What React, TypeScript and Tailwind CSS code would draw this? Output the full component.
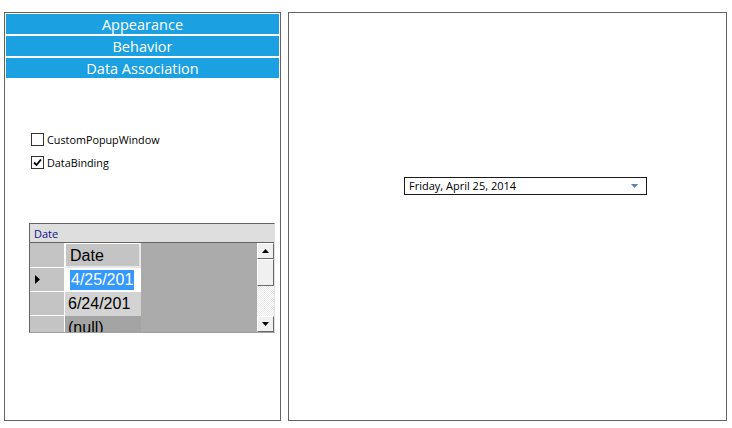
import React from "react";

const seg = { fontFamily: '"Open Sans", "Noto Sans", sans-serif' };
const ms = { fontFamily: '"Liberation Sans", Arial, sans-serif' };

function Bar({ label }: { label: string }) {
  return (
    <div
      className="h-[20px] bg-[#1ba1e2] text-white text-[14.5px] leading-[21px] text-center"
      style={seg}
    >
      {label}
    </div>
  );
}

function Check({ checked, label }: { checked?: boolean; label: string }) {
  return (
    <div className="flex items-center h-[13px]">
      <div className="w-[13px] h-[13px] border border-[#333] bg-white flex items-center justify-center">
        {checked && (
          <svg width="9" height="9" viewBox="0 0 9 9">
            <path d="M1 4.5 L3.5 7 L8 1.5" stroke="#000" strokeWidth="1.8" fill="none" />
          </svg>
        )}
      </div>
      <span className="ml-[3px] text-[10.8px] text-[#000] leading-[13px]" style={seg}>
        {label}
      </span>
    </div>
  );
}

function Grid() {
  return (
    <div className="ml-[23px] mt-[54px] w-[246px] h-[110px] border border-[#646464] border-b-[#a0a0a0] border-r-[#e0e0e0] bg-[#ababab] flex flex-col overflow-hidden">
      <div
        className="h-[19px] bg-[#dedede] border-b border-[#646464] text-[11px] leading-[19px] text-[#10108c] pl-[4px] shrink-0"
        style={seg}
      >
        Date
      </div>
      <div className="flex flex-1 min-h-0">
        <div className="flex-1 flex flex-col" style={ms}>
          <div className="flex h-[25px] shrink-0">
            <div className="w-[35px] h-full bg-[#c4c4c4] border-r border-b border-[#ffffff]" />
            <div className="w-[76px] h-full bg-[#c4c4c4] border-t border-l border-white border-r-2 border-b-2 border-r-[#e8e8e8] border-b-[#e8e8e8] text-[16px] leading-[23px] pl-[4px] text-black">
              Date
            </div>
          </div>
          <div className="flex h-[24px] shrink-0">
            <div className="w-[35px] h-full bg-[#c4c4c4] border-r border-b border-[#ffffff] flex items-center pl-[5px]">
              <svg width="5" height="9" viewBox="0 0 5 9">
                <path d="M0 0 L5 4.5 L0 9 Z" fill="#000" />
              </svg>
            </div>
            <div className="w-[76px] h-full bg-white flex items-center pl-[5px]">
              <span className="bg-[#3399ff] text-white text-[16px] leading-[20px] px-[1px]">4/25/201</span>
            </div>
          </div>
          <div className="flex h-[24px] shrink-0">
            <div className="w-[35px] h-full bg-[#c4c4c4] border-r border-b border-[#ffffff]" />
            <div className="w-[76px] h-full bg-[#d3d3d3] text-[16px] leading-[24px] pl-[3px] text-black">
              6/24/201
            </div>
          </div>
          <div className="flex h-[24px] shrink-0">
            <div className="w-[35px] h-full bg-[#c4c4c4] border-r border-[#ffffff]" />
            <div className="w-[76px] h-full bg-[#a4a4a4] text-[16px] leading-[24px] pl-[3px] text-black">
              (null)
            </div>
          </div>
        </div>
        <div className="w-[17px] flex flex-col bg-[repeating-conic-gradient(#ffffff_0%_25%,#e8e8e8_0%_50%)] bg-[length:2px_2px]">
          <div className="h-[16px] bg-[#f0f0f0] border border-white border-r-[#696969] border-b-[#696969] flex items-center justify-center">
            <svg width="7" height="4" viewBox="0 0 7 4">
              <path d="M0 4 L3.5 0 L7 4 Z" fill="#000" />
            </svg>
          </div>
          <div className="h-[27px] bg-[#f0f0f0] border border-white border-r-[#696969] border-b-[#696969]" />
          <div className="flex-1" />
          <div className="h-[16px] bg-[#f0f0f0] border border-white border-r-[#696969] border-b-[#696969] flex items-center justify-center">
            <svg width="7" height="4" viewBox="0 0 7 4">
              <path d="M0 0 L7 0 L3.5 4 Z" fill="#000" />
            </svg>
          </div>
        </div>
      </div>
    </div>
  );
}

export default function App() {
  return (
    <div className="w-[732px] h-[428px] bg-white flex pl-[4px] pt-[12px] gap-[7px]">
      <div className="w-[277px] h-[409px] border border-[#646464] p-[1px] flex flex-col">
        <div className="flex flex-col gap-[2px]">
          <Bar label="Appearance" />
          <Bar label="Behavior" />
          <Bar label="Data Association" />
        </div>
        <div className="ml-[25px] mt-[55px] flex flex-col gap-[10px]">
          <Check label="CustomPopupWindow" />
          <Check checked label="DataBinding" />
        </div>
        <Grid />
      </div>
      <div className="w-[439px] h-[409px] border border-[#646464] flex flex-col">
        <div
          className="ml-[115px] mt-[164px] w-[243px] h-[18px] border border-[#1a1a1a] flex items-center justify-between pl-[4px] pr-[8px]"
          style={seg}
        >
          <span className="text-[11px] text-black">Friday, April 25, 2014</span>
          <svg width="7" height="4" viewBox="0 0 7 4">
            <path d="M0 0 L7 0 L3.5 4 Z" fill="#5b7fb8" />
          </svg>
        </div>
      </div>
    </div>
  );
}
